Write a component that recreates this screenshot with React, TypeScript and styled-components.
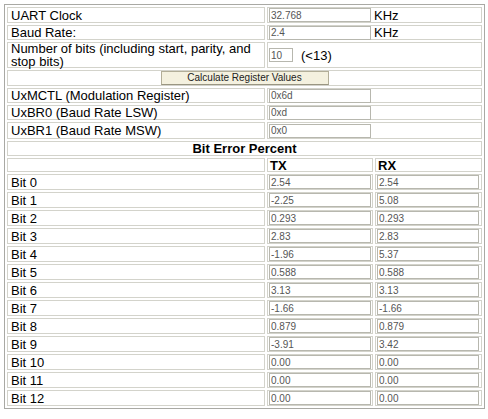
import React from "react";
import styled, { createGlobalStyle } from "styled-components";

const GlobalStyle = createGlobalStyle`
  html, body {
    margin: 0;
    padding: 0;
    background: #ffffff;
  }
  body {
    font-family: "Liberation Sans", Arial, sans-serif;
    font-size: 13px;
    color: #000;
  }
`;

const Page = styled.div`
  padding: 4px 0 0 4px;
`;

const Sheet = styled.div`
  display: grid;
  grid-template-columns: 258px 106px 107px;
  gap: 2px;
  padding: 2px;
  border: 1px solid #a9a9a4;
  width: max-content;
`;

const Cell = styled.div<{ $h: number; $span?: number; $center?: boolean; $pad?: number }>`
  box-sizing: border-box;
  height: ${(p) => p.$h}px;
  grid-column: span ${(p) => p.$span ?? 1};
  border: 1px solid #d3d3cb;
  display: flex;
  align-items: center;
  justify-content: ${(p) => (p.$center ? "center" : "flex-start")};
  padding: 0 0 0 ${(p) => p.$pad ?? 3}px;
  line-height: 13px;
  white-space: normal;
`;

const HeadText = styled.span`
  font-weight: bold;
`;

const Field = styled.input<{ $w?: number }>`
  box-sizing: border-box;
  width: ${(p) => p.$w ?? 102}px;
  height: 14px;
  border: 1px solid #b7b7ae;
  background: #fff;
  padding: 0 0 0 1px;
  margin: 0;
  font-family: "Liberation Sans", Arial, sans-serif;
  font-size: 10px;
  color: #555;
  outline: none;
`;

const Unit = styled.span<{ $gap: number }>`
  margin-left: ${(p) => p.$gap}px;
`;

const CalcButton = styled.button`
  box-sizing: border-box;
  width: 168px;
  height: 14px;
  margin: 0;
  padding: 0;
  border: 1px solid #b2ae98;
  border-bottom-color: #9a9682;
  background: #f4f1df;
  font-family: "Liberation Sans", Arial, sans-serif;
  font-size: 10px;
  line-height: 12px;
  color: #222;
`;

const tx = ["2.54", "-2.25", "0.293", "2.83", "-1.96", "0.588", "3.13", "-1.66", "0.879", "-3.91", "0.00", "0.00", "0.00"];
const rx = ["2.54", "5.08", "0.293", "2.83", "5.37", "0.588", "3.13", "-1.66", "0.879", "3.42", "0.00", "0.00", "0.00"];

const registers = [
  { label: "UxMCTL (Modulation Register)", value: "0x6d", h: 15 },
  { label: "UxBR0 (Baud Rate LSW)", value: "0xd", h: 15 },
  { label: "UxBR1 (Baud Rate MSW)", value: "0x0", h: 17 },
];

export default function App() {
  return (
    <>
      <GlobalStyle />
      <Page>
        <Sheet>
          <Cell $h={16}>UART Clock</Cell>
          <Cell $h={16} $span={2} $pad={1}>
            <Field readOnly value="32.768" />
            <Unit $gap={3}>KHz</Unit>
          </Cell>

          <Cell $h={15}>Baud Rate:</Cell>
          <Cell $h={15} $span={2} $pad={1}>
            <Field readOnly value="2.4" />
            <Unit $gap={3}>KHz</Unit>
          </Cell>

          <Cell $h={26}>Number of bits (including start, parity, and stop bits)</Cell>
          <Cell $h={26} $span={2} $pad={1}>
            <Field readOnly value="10" $w={24} />
            <Unit $gap={8}>(&lt;13)</Unit>
          </Cell>

          <Cell $h={16} $span={3} $center $pad={0}>
            <CalcButton type="button">Calculate Register Values</CalcButton>
          </Cell>

          {registers.map((r) => (
            <React.Fragment key={r.label}>
              <Cell $h={r.h}>{r.label}</Cell>
              <Cell $h={r.h} $span={2} $pad={1}>
                <Field readOnly value={r.value} />
              </Cell>
            </React.Fragment>
          ))}

          <Cell $h={15} $span={3} $center $pad={0}>
            <HeadText>Bit Error Percent</HeadText>
          </Cell>

          <Cell $h={14} />
          <Cell $h={14} $pad={2}>
            <HeadText>TX</HeadText>
          </Cell>
          <Cell $h={14} $pad={2}>
            <HeadText>RX</HeadText>
          </Cell>

          {tx.map((t, i) => (
            <React.Fragment key={i}>
              <Cell $h={16}>Bit {i}</Cell>
              <Cell $h={16} $pad={1}>
                <Field readOnly value={t} />
              </Cell>
              <Cell $h={16} $pad={1}>
                <Field readOnly value={rx[i]} />
              </Cell>
            </React.Fragment>
          ))}
        </Sheet>
      </Page>
    </>
  );
}
